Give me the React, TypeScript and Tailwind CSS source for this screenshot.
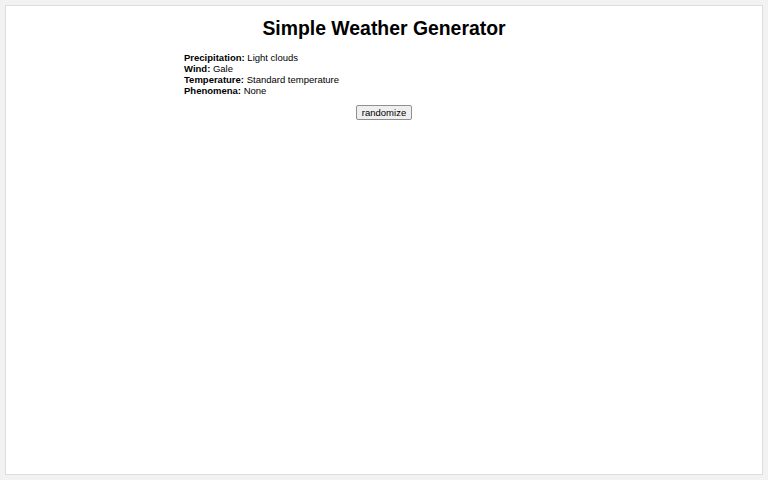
export default function App() {
  return (
    <div className="h-screen bg-[#f2f2f2] p-[5px] font-['Liberation_Sans',Arial,sans-serif] text-black">
      <div className="h-full border border-[#dcdcdc] bg-white">
        <h1 className="pt-[11px] text-center text-[19.4px] leading-[23px] font-bold">Simple Weather Generator</h1>
        <div className="mx-auto mt-[12px] w-[400px] text-[9.5px] leading-[11px]">
          <div>
            <b>Precipitation:</b> Light clouds
          </div>
          <div>
            <b>Wind:</b> Gale
          </div>
          <div>
            <b>Temperature:</b> Standard temperature
          </div>
          <div>
            <b>Phenomena:</b> None
          </div>
        </div>
        <div className="mt-[9px] flex justify-center">
          <button className="h-[15px] rounded-[2px] border border-[#8f8f8f] bg-[#efefef] px-[5px] text-[9.5px] leading-[12px]">
            randomize
          </button>
        </div>
      </div>
    </div>
  );
}
